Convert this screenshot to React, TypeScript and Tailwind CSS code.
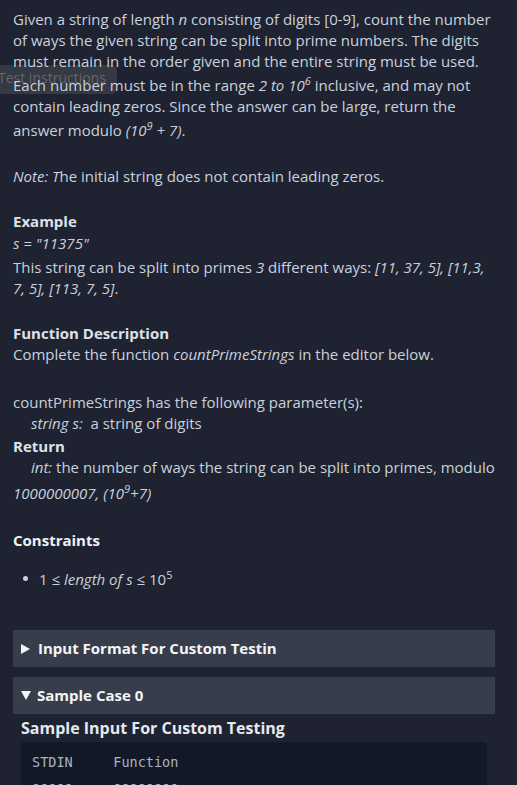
import React from 'react';

function Sup({ children }: { children: React.ReactNode }) {
  return <sup className="relative top-0 align-super text-[11px] leading-[17px]">{children}</sup>;
}

export default function App() {
  return (
    <div className="relative min-h-[785px] w-[517px] overflow-hidden bg-[#1f2331] font-['Open_Sans',sans-serif] text-[15px] leading-[21px] text-[#c9d1dd]">
      {/* Tooltip peeking out from the left */}
      <div className="absolute left-0 top-[65px] z-0 h-[29px] w-[117px] rounded-r-md bg-[#3a3e48]/80">
        <span className="absolute -left-[2px] top-[2px] text-[14px] text-[#62666f]">Test instructions</span>
      </div>

      <div className="relative z-10 px-[13px] pt-[9px]">
        <p>
          Given a string of length <em>n</em> consisting of digits [0-9], count the number of ways the given string can be
          split into prime numbers. The digits must remain in the order given and the entire string must be used. Each
          number must be in the range <em>2 to 10<Sup>6</Sup></em> inclusive, and may not contain leading zeros. Since
          the answer can be large, return the answer modulo <em>(10<Sup>9</Sup> + 7)</em>.
        </p>
        <p className="mt-[25px]">
          <em>Note: T</em>he initial string does not contain leading zeros.
        </p>

        <div className="mt-[24px]">
          <div className="font-bold text-[#dce2ea]">Example</div>
          <div className="mt-[1px]">
            <em>s = "11375"</em>
          </div>
          <div className="mt-[3px]">
            This string can be split into primes <em>3</em> different ways: <em>[11, 37, 5], [11,3,</em>
            <br />
            <em>7, 5], [113, 7, 5]</em>.
          </div>
        </div>

        <div className="mt-[24px]">
          <div className="font-bold text-[#dce2ea]">Function Description</div>
          <div>
            Complete the function <em>countPrimeStrings</em> in the editor below.
          </div>
        </div>

        <div className="mt-[27px]">
          <div>countPrimeStrings has the following parameter(s):</div>
          <div className="pl-[18px]">
            <em>string s:</em>&nbsp; a string of digits
          </div>
          <div className="mt-[2px] font-bold text-[#dce2ea]">Return</div>
          <div className="pl-[18px]">
            <em>int:</em> the number of ways the string can be split into primes, modulo
          </div>
          <div className="mt-[2px]">
            <em>1000000007, (10<Sup>9</Sup>+7)</em>
          </div>
        </div>

        <div className="mt-[26px] font-bold text-[#eef2f7]">Constraints</div>
        <ul className="mt-[15px] pl-[10px]">
          <li className="flex items-center gap-[11px]">
            <span className="h-[5px] w-[5px] rounded-full bg-[#c9d1dd]" />
            <span>
              1 ≤ <em>length of s</em> ≤ 10<Sup>5</Sup>
            </span>
          </li>
        </ul>

        <div className="mt-[40px] mr-[9px] flex h-[37px] items-center gap-[8px] bg-[#383d4b] px-[8px] font-bold text-[#f3f5f8]">
          <svg width="9" height="10" viewBox="0 0 9 10" className="fill-[#f3f5f8]">
            <path d="M0 0 L9 5 L0 10 Z" />
          </svg>
          <span>Input Format For Custom Testin</span>
        </div>

        <div className="mt-[10px] mr-[9px] flex h-[37px] items-center gap-[6px] bg-[#383d4b] px-[8px] font-bold text-[#f3f5f8]">
          <svg width="10" height="9" viewBox="0 0 10 9" className="fill-[#f3f5f8]">
            <path d="M0 0 L10 0 L5 9 Z" />
          </svg>
          <span>Sample Case 0</span>
        </div>

        <div className="mr-[9px] px-[8px]">
          <div className="mt-[4px] text-[16px] font-bold text-[#e4e9f0]">Sample Input For Custom Testing</div>
          <pre className="mt-[3px] rounded-sm bg-[#131826] px-[11px] pt-[9px] pb-[12px] font-['DejaVu_Sans_Mono',monospace] text-[13.5px] leading-[22px] text-[#a9b3c2]">
{`STDIN     Function
-----     --------
5         s = 11375`}
          </pre>
        </div>
      </div>
    </div>
  );
}
